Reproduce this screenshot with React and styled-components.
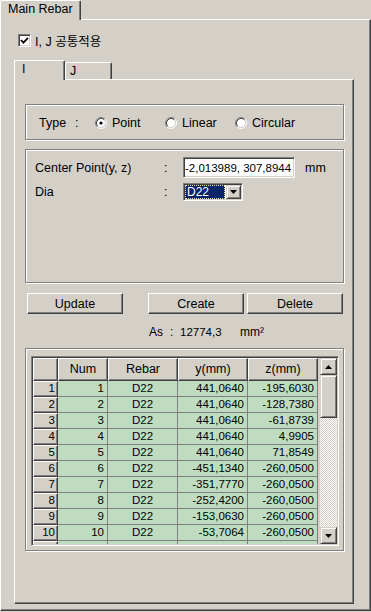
import React from 'react';
import styled, { createGlobalStyle } from 'styled-components';

const BG = '#d4d0c8';
const FONT = '"Liberation Sans", Arial, "Noto Sans CJK KR", sans-serif';

const GlobalStyle = createGlobalStyle`
  html, body { margin: 0; padding: 0; background: ${BG}; }
  body { font-family: ${FONT}; font-size: 12px; color: #000; }
  * { box-sizing: border-box; }
`;

const Root = styled.div`
  width: 371px;
  height: 612px;
  display: flex;
  flex-direction: column;
  background: ${BG};
  overflow: hidden;
`;

const TabStrip = styled.div`
  display: flex;
  align-items: flex-end;
  height: 19px;
  flex-shrink: 0;
`;

const Tab = styled.div`
  position: relative;
  width: ${p => p.$w}px;
  height: ${p => (p.$selected ? 20 : 17)}px;
  margin-bottom: ${p => (p.$selected ? -1 : 0)}px;
  padding-left: ${p => p.$pl}px;
  padding-bottom: ${p => (p.$selected ? 3 : 1)}px;
  background: ${BG};
  border-top: 1px solid #fff;
  border-left: 1px solid #fff;
  border-right: 1px solid #404040;
  border-top-left-radius: 2px;
  border-top-right-radius: 2px;
  box-shadow: inset -1px 0 0 #808080;
  display: flex;
  align-items: center;
  font-size: 12.5px;
  white-space: nowrap;
`;

const Page = styled.div`
  width: ${p => p.$w}px;
  height: ${p => p.$h}px;
  flex-shrink: 0;
  border-top: 1px solid #fff;
  border-left: 1px solid #fff;
  border-right: 1px solid #404040;
  border-bottom: 1px solid #404040;
  box-shadow: inset -1px -1px 0 #808080;
  display: flex;
  flex-direction: column;
  padding: ${p => p.$pad};
`;

const CheckRow = styled.label`
  display: flex;
  align-items: center;
  gap: 4px;
  height: 13px;
  margin-left: 4px;
  margin-bottom: 13px;
  font-size: 12.5px;
`;

const CheckBox = styled.span`
  width: 13px;
  height: 13px;
  background: #fff;
  border: 1px solid;
  border-color: #808080 #fff #fff #808080;
  box-shadow: inset 1px 1px 0 #404040, inset -1px -1px 0 ${BG};
  display: flex;
  align-items: center;
  justify-content: center;
`;

const InnerTabs = styled.div`
  display: flex;
  flex-direction: column;
  width: 340px;
`;

const GroupBox = styled.div`
  width: 319px;
  height: ${p => p.$h}px;
  margin-bottom: ${p => p.$mb || 0}px;
  border: 1px solid #808080;
  box-shadow: 1px 1px 0 #fff, inset 1px 1px 0 #fff;
  padding: ${p => p.$pad || '0'};
  flex-shrink: 0;
`;

const TypeRow = styled.div`
  display: flex;
  align-items: center;
  height: 100%;
  padding-left: 13px;
  padding-top: 2px;
`;

const TypeLabel = styled.div`
  width: 56px;
  display: flex;
  gap: 9px;
  font-size: 12.5px;
`;

const RadioItem = styled.div`
  width: ${p => p.$w}px;
  display: flex;
  align-items: center;
  gap: 5px;
  font-size: 12.5px;
`;

const RadioSvg = styled.svg`
  display: block;
  flex-shrink: 0;
`;

const FormGrid = styled.div`
  display: grid;
  grid-template-columns: 129px 19px auto 1fr;
  grid-auto-rows: auto;
  row-gap: 5px;
  align-items: center;
  padding-left: 9px;
`;

const Label = styled.span`
  font-size: 12.5px;
`;

const TextBox = styled.input`
  width: 112px;
  height: 21px;
  margin: 0;
  padding: 0 0 0 1px;
  background: #fff;
  border: 1px solid;
  border-color: #808080 #fff #fff #808080;
  box-shadow: inset 1px 1px 0 #404040, inset -1px -1px 0 ${BG};
  font-family: ${FONT};
  font-size: 11.5px;
  color: #000;
  outline: none;
`;

const Unit = styled.span`
  font-size: 12.5px;
  margin-left: 10px;
`;

const Combo = styled.div`
  width: 60px;
  height: 18px;
  background: #fff;
  border: 1px solid;
  border-color: #808080 #fff #fff #808080;
  box-shadow: inset 1px 1px 0 #404040, inset -1px -1px 0 ${BG};
  padding: 1px;
  display: flex;
`;

const ComboValue = styled.div`
  flex: 1;
  margin-right: 1px;
  background: #0a246a;
  color: #fff;
  border: 1px dotted #e8e0a0;
  font-size: 12px;
  line-height: 12px;
  padding-left: 1px;
`;

const RaisedButton = styled.div`
  width: ${p => p.$w}px;
  height: ${p => p.$h}px;
  flex-shrink: 0;
  background: ${BG};
  border: 1px solid;
  border-color: ${BG} #404040 #404040 ${BG};
  box-shadow: inset 1px 1px 0 #fff, inset -1px -1px 0 #808080;
  display: flex;
  align-items: center;
  justify-content: center;
`;

const ButtonRow = styled.div`
  display: flex;
  height: 21px;
  padding-left: 2px;
  margin-bottom: 10px;
  flex-shrink: 0;
`;

const PushButton = styled.button`
  width: 96px;
  height: 21px;
  margin: 0 0 0 ${p => p.$ml || 0}px;
  padding: 0;
  background: ${BG};
  border: 1px solid;
  border-color: #fff #404040 #404040 #fff;
  box-shadow: inset -1px -1px 0 #808080;
  font-family: ${FONT};
  font-size: 12.5px;
  color: #000;
`;

const AsRow = styled.div`
  display: flex;
  align-items: center;
  height: 16px;
  padding-left: 124px;
  margin-bottom: 8px;
  font-size: 12px;
  flex-shrink: 0;
`;

const AsPart = styled.span`
  width: ${p => (p.$w ? `${p.$w}px` : 'auto')};
  font-size: ${p => p.$fs || 12}px;
`;

const GridFrame = styled.div`
  width: 308px;
  height: 190px;
  border: 1px solid;
  border-color: #808080 #fff #fff #808080;
  box-shadow: inset 1px 1px 0 #404040, inset -1px -1px 0 ${BG};
  padding: 1px;
  display: flex;
  overflow: hidden;
  background: ${BG};
`;

const DataArea = styled.div`
  width: 285px;
  display: flex;
  flex-direction: column;
  overflow: hidden;
`;

const GridRow = styled.div`
  display: grid;
  grid-template-columns: 25px 50px 70px 70px 70px;
  height: ${p => p.$h}px;
  flex-shrink: 0;
`;

const HeadCell = styled.div`
  background: ${BG};
  border: 1px solid;
  border-color: #fff #404040 #404040 #fff;
  box-shadow: inset -1px -1px 0 #808080;
  display: flex;
  align-items: center;
  justify-content: ${p => p.$justify || 'center'};
  padding-right: ${p => p.$pr || 0}px;
  font-size: ${p => p.$fs || 12.5}px;
  line-height: 1;
`;

const DataCell = styled.div`
  background: #c0dcc0;
  border-right: 1px solid #808080;
  border-bottom: 1px solid #808080;
  display: flex;
  align-items: center;
  justify-content: ${p => (p.$align === 'center' ? 'center' : 'flex-end')};
  padding: 0 3px 0 3px;
  font-size: 11.5px;
  line-height: 1;
  white-space: nowrap;
`;

const ScrollCol = styled.div`
  width: 17px;
  margin-left: 2px;
  display: flex;
  flex-direction: column;
`;

const ScrollTrack = styled.div`
  flex: 1;
  background: repeating-conic-gradient(#ffffff 0 25%, ${BG} 0 50%) 0 0 / 2px 2px;
`;

const Check = () => (
  <svg width="9" height="9" viewBox="0 0 9 9">
    <polyline points="1,4 3.4,6.6 8,1.8" fill="none" stroke="#000" strokeWidth="1.8" />
  </svg>
);

const Radio = ({ checked }) => (
  <RadioSvg width="12" height="12" viewBox="0 0 12 12">
    <circle cx="6" cy="6" r="4.5" fill="#fff" />
    <path d="M2.11 9.89 A5.5 5.5 0 0 1 9.89 2.11" fill="none" stroke="#808080" />
    <path d="M9.89 2.11 A5.5 5.5 0 0 1 2.11 9.89" fill="none" stroke="#fff" />
    <path d="M2.82 9.18 A4.5 4.5 0 0 1 9.18 2.82" fill="none" stroke="#404040" />
    <path d="M9.18 2.82 A4.5 4.5 0 0 1 2.82 9.18" fill="none" stroke={BG} />
    {checked && <circle cx="6" cy="6" r="1.6" fill="#000" />}
  </RadioSvg>
);

const Arrow = ({ up }) => (
  <svg width="7" height="4" viewBox="0 0 7 4">
    <polygon points={up ? '3.5,0 7,4 0,4' : '0,0 7,0 3.5,4'} fill="#000" />
  </svg>
);

const rows = [
  [1, 'D22', '441,0640', '-195,6030'],
  [2, 'D22', '441,0640', '-128,7380'],
  [3, 'D22', '441,0640', '-61,8739'],
  [4, 'D22', '441,0640', '4,9905'],
  [5, 'D22', '441,0640', '71,8549'],
  [6, 'D22', '-451,1340', '-260,0500'],
  [7, 'D22', '-351,7770', '-260,0500'],
  [8, 'D22', '-252,4200', '-260,0500'],
  [9, 'D22', '-153,0630', '-260,0500'],
  [10, 'D22', '-53,7064', '-260,0500'],
];

export default function App() {
  return (
    <>
      <GlobalStyle />
      <Root>
        <TabStrip>
          <Tab $selected $w={81} $pl={7}>Main Rebar</Tab>
        </TabStrip>
        <Page $w={371} $h={592} $pad="14px 0 0 13px">
          <CheckRow>
            <CheckBox><Check /></CheckBox>
            <span>I, J 공통적용</span>
          </CheckRow>
          <InnerTabs>
            <TabStrip>
              <Tab $selected $w={51} $pl={7}>I</Tab>
              <Tab $w={47} $pl={4}>J</Tab>
            </TabStrip>
            <Page $w={340} $h={525} $pad="24px 0 0 10px">
              <GroupBox $h={36} $mb={9}>
                <TypeRow>
                  <TypeLabel><span>Type</span><span>:</span></TypeLabel>
                  <RadioItem $w={70}><Radio checked /><span>Point</span></RadioItem>
                  <RadioItem $w={70}><Radio /><span>Linear</span></RadioItem>
                  <RadioItem $w={80}><Radio /><span>Circular</span></RadioItem>
                </TypeRow>
              </GroupBox>
              <GroupBox $h={134} $mb={10} $pad="7px 0 0 0">
                <FormGrid>
                  <Label>Center Point(y, z)</Label>
                  <Label>:</Label>
                  <TextBox readOnly value="-2,013989, 307,8944" />
                  <Unit>mm</Unit>
                  <Label>Dia</Label>
                  <Label>:</Label>
                  <Combo>
                    <ComboValue>D22</ComboValue>
                    <RaisedButton $w={15} $h={14}><Arrow /></RaisedButton>
                  </Combo>
                  <span />
                </FormGrid>
              </GroupBox>
              <ButtonRow>
                <PushButton>Update</PushButton>
                <PushButton $ml={25}>Create</PushButton>
                <PushButton $ml={3}>Delete</PushButton>
              </ButtonRow>
              <AsRow>
                <AsPart $w={21}>As</AsPart>
                <AsPart $w={10}>:</AsPart>
                <AsPart $w={60} $fs={11.5}>12774,3</AsPart>
                <AsPart>mm²</AsPart>
              </AsRow>
              <GroupBox $h={203} $pad="7px 0 0 5px">
                <GridFrame>
                  <DataArea>
                    <GridRow $h={23}>
                      <HeadCell />
                      <HeadCell>Num</HeadCell>
                      <HeadCell>Rebar</HeadCell>
                      <HeadCell>y(mm)</HeadCell>
                      <HeadCell>z(mm)</HeadCell>
                    </GridRow>
                    {rows.map(r => (
                      <GridRow key={r[0]} $h={16}>
                        <HeadCell $justify="flex-end" $pr={2} $fs={11.5}>{r[0]}</HeadCell>
                        <DataCell>{r[0]}</DataCell>
                        <DataCell $align="center">{r[1]}</DataCell>
                        <DataCell>{r[2]}</DataCell>
                        <DataCell>{r[3]}</DataCell>
                      </GridRow>
                    ))}
                    <GridRow $h={16}>
                      <HeadCell />
                      <DataCell />
                      <DataCell />
                      <DataCell />
                      <DataCell />
                    </GridRow>
                  </DataArea>
                  <ScrollCol>
                    <RaisedButton $w={17} $h={17}><Arrow up /></RaisedButton>
                    <RaisedButton $w={17} $h={43} />
                    <ScrollTrack />
                    <RaisedButton $w={17} $h={17}><Arrow /></RaisedButton>
                  </ScrollCol>
                </GridFrame>
              </GroupBox>
            </Page>
          </InnerTabs>
        </Page>
      </Root>
    </>
  );
}
